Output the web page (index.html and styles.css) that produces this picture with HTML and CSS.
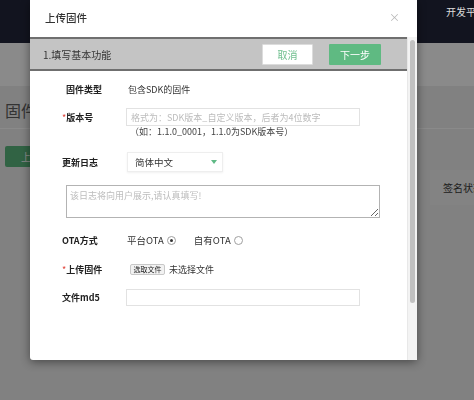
FILE: index.html
```html
<!DOCTYPE html>
<html lang="zh-CN">

<head>
    <meta charset="UTF-8" />
    <meta name="viewport" content="width=device-width, initial-scale=1.0" />
    <title>上传固件</title>
    <link rel="stylesheet" href="styles.css">
</head>

<body>

    <header class="topbar">
        <nav class="nav">开发平台 &nbsp; 文档中心</nav>
    </header>

    <main class="page">
        <div class="page-band"></div>
        <div class="page-body">
            <h2 class="page-title">固件管理</h2>
            <button class="btn-upload">上传固件</button>
            <div class="table-head">签名状态</div>
        </div>
    </main>

    <div class="mask"></div>

    <div class="dialog">
        <div class="dialog-header">
            <span class="dialog-title">上传固件</span>
            <span class="dialog-close">×</span>
        </div>
        <div class="dialog-body">
            <div class="dialog-content">
                <div class="steps">
                    <span class="step-name">1.填写基本功能</span>
                    <div class="step-actions">
                        <button class="btn-cancel">取消</button>
                        <button class="btn-next">下一步</button>
                    </div>
                </div>

                <form class="form">
                    <div class="row">
                        <label class="label label-indent">固件类型</label>
                        <span class="value value-type">包含SDK的固件</span>
                    </div>
                    <div class="row row-version">
                        <label class="label"><span class="req">*</span>版本号</label>
                        <input class="input" type="text" placeholder="格式为：SDK版本_自定义版本，后者为4位数字">
                    </div>
                    <p class="hint">（如：1.1.0_0001，1.1.0为SDK版本号）</p>
                    <div class="row row-log">
                        <label class="label">更新日志</label>
                        <div class="select">
                            <span>简体中文</span>
                            <i class="caret"></i>
                        </div>
                    </div>
                    <textarea class="textarea" placeholder="该日志将向用户展示,请认真填写!"></textarea>
                    <div class="row row-ota">
                        <label class="label">OTA方式</label>
                        <span class="option">平台OTA <i class="radio checked"></i></span>
                        <span class="option">自有OTA <i class="radio"></i></span>
                    </div>
                    <div class="row row-file">
                        <label class="label"><span class="req">*</span>上传固件</label>
                        <span class="file-btn">选取文件</span>
                        <span class="value">未选择文件</span>
                    </div>
                    <div class="row row-md5">
                        <label class="label">文件md5</label>
                        <input class="input input-md5" type="text">
                    </div>
                </form>
            </div>
            <div class="scrollbar">
                <div class="scrollbar-thumb"></div>
            </div>
        </div>
    </div>

</body>

</html>
```

FILE: styles.css
```css
* {
    margin: 0;
    padding: 0;
    box-sizing: border-box;
}

body {
    width: 474px;
    height: 400px;
    overflow: hidden;
    background-color: #eeeeee;
    font-family: "Noto Sans CJK SC", "Liberation Sans", sans-serif;
    color: #333;
}

button,
input,
textarea {
    font-family: inherit;
}

/* page behind the dialog */
.topbar {
    position: relative;
    z-index: 3;
    height: 43px;
    background-color: #12141f;
}

.nav {
    padding: 5px 0 0 446px;
    font-size: 10px;
    line-height: 14px;
    color: #dcdcdc;
    white-space: nowrap;
    overflow: hidden;
}

.page-band {
    height: 43px;
    background-color: #ffffff;
}

.page-body {
    padding-left: 5px;
}

.page-title {
    height: 43px;
    padding-top: 12px;
    margin-left: -5px;
    padding-left: 5px;
    font-size: 16px;
    line-height: 24px;
    font-weight: normal;
    color: #5e5e5e;
    border-bottom: 1px solid #ffffff;
}

.btn-upload {
    margin-top: 17px;
    width: 72px;
    height: 21px;
    border: none;
    border-radius: 2px;
    background-color: #5cb87e;
    color: #fff;
    font-size: 10px;
}

.table-head {
    margin: 3px 0 0 425px;
    height: 35px;
    padding-left: 13px;
    line-height: 35px;
    font-size: 10px;
    color: #3a3a3a;
    background-color: #f2f2f2;
    white-space: nowrap;
}

.mask {
    position: fixed;
    inset: 0;
    z-index: 2;
    background-color: rgba(0, 0, 0, 0.46);
}

/* dialog */
.dialog {
    position: absolute;
    z-index: 4;
    left: 30px;
    top: 0;
    width: 387px;
    height: 360px;
    background-color: #fff;
    border-radius: 0 0 3px 3px;
    box-shadow: 0 2px 10px rgba(0, 0, 0, 0.45);
    display: flex;
    flex-direction: column;
}

.dialog-header {
    height: 37px;
    display: flex;
    justify-content: space-between;
    align-items: center;
    padding: 0 17px 3px 15px;
}

.dialog-title {
    font-size: 10.5px;
    font-weight: 500;
    color: #333;
}

.dialog-close {
    font-size: 11px;
    color: #b8b8b8;
}

.dialog-body {
    flex: 1;
    display: flex;
}

.dialog-content {
    flex: 1;
}

.scrollbar {
    width: 10px;
    padding: 3px 2px 0;
    background-color: #f3f3f3;
    border-left: 1px solid #e8e8e8;
}

.scrollbar-thumb {
    height: 263px;
    border-radius: 3px;
    background-color: #c1c1c1;
}

.steps {
    height: 34px;
    display: flex;
    justify-content: space-between;
    align-items: center;
    padding: 0 26px 0 13px;
    background-color: #c4c4c4;
    border-top: 2px solid #6f6f6f;
    border-bottom: 2px solid #6f6f6f;
}

.step-name {
    font-size: 10px;
    color: #333;
}

.step-actions {
    display: flex;
    gap: 16px;
}

.btn-cancel,
.btn-next {
    height: 21px;
    font-size: 10px;
    border-radius: 1px;
}

.btn-cancel {
    width: 51px;
    border: 1px solid #dcdcdc;
    background-color: #fff;
    color: #6fbf8e;
}

.btn-next {
    width: 52px;
    border: none;
    background-color: #5fba82;
    color: #fff;
}

/* form */
.form {
    padding: 9px 0 0 32px;
    font-size: 9px;
}

.row {
    display: flex;
    align-items: center;
    min-height: 18px;
}

.label {
    width: 64px;
    flex-shrink: 0;
    font-weight: bold;
    color: #222;
}

.label-indent {
    padding-left: 4px;
}

.req {
    color: #e0443a;
    font-weight: normal;
}

.value-type {
    margin-left: 2px;
}

.row-version {
    margin-top: 10px;
}

.input {
    width: 234px;
    height: 18px;
    padding: 0 4px;
    font-size: 9px;
    border: 1px solid #e2e2e2;
    color: #333;
    outline: none;
}

.input::placeholder,
.textarea::placeholder {
    color: #bcbcbc;
}

.hint {
    padding-left: 68px;
    line-height: 12px;
    color: #444;
}

.row-log {
    margin-top: 14px;
}

.select {
    margin-left: 1px;
    width: 96px;
    height: 20px;
    display: flex;
    justify-content: space-between;
    align-items: center;
    padding: 0 5px 0 7px;
    border: 1px solid #eeeeee;
    box-shadow: 0 1px 2px rgba(0, 0, 0, 0.06);
    font-size: 9.5px;
    color: #333;
}

.caret {
    border-left: 3px solid transparent;
    border-right: 3px solid transparent;
    border-top: 4px solid #5fb985;
}

.textarea {
    display: block;
    margin: 13px 0 0 4px;
    width: 314px;
    height: 33px;
    padding: 3px;
    font-size: 9px;
    border: 1px solid #b3b3b3;
    outline: none;
}

.row-ota {
    margin-top: 13px;
}

.option {
    display: flex;
    align-items: center;
    gap: 3px;
    margin-left: 1px;
    margin-right: 17px;
    font-size: 9.5px;
    color: #333;
}

.radio {
    width: 9px;
    height: 9px;
    border-radius: 50%;
    border: 1px solid #a0a0a0;
    display: flex;
    justify-content: center;
    align-items: center;
}

.radio.checked::after {
    content: "";
    width: 3px;
    height: 3px;
    border-radius: 50%;
    background-color: #333;
}

.row-file {
    margin-top: 11px;
}

.file-btn {
    margin-left: 4px;
    width: 35px;
    height: 11px;
    line-height: 9px;
    text-align: center;
    font-size: 7px;
    border: 1px solid #c8c8c8;
    border-radius: 2px;
    background-color: #f2f2f2;
    color: #222;
    margin-right: 4px;
}

.row-md5 {
    margin-top: 10px;
}

.input-md5 {
    height: 17px;
}
```
